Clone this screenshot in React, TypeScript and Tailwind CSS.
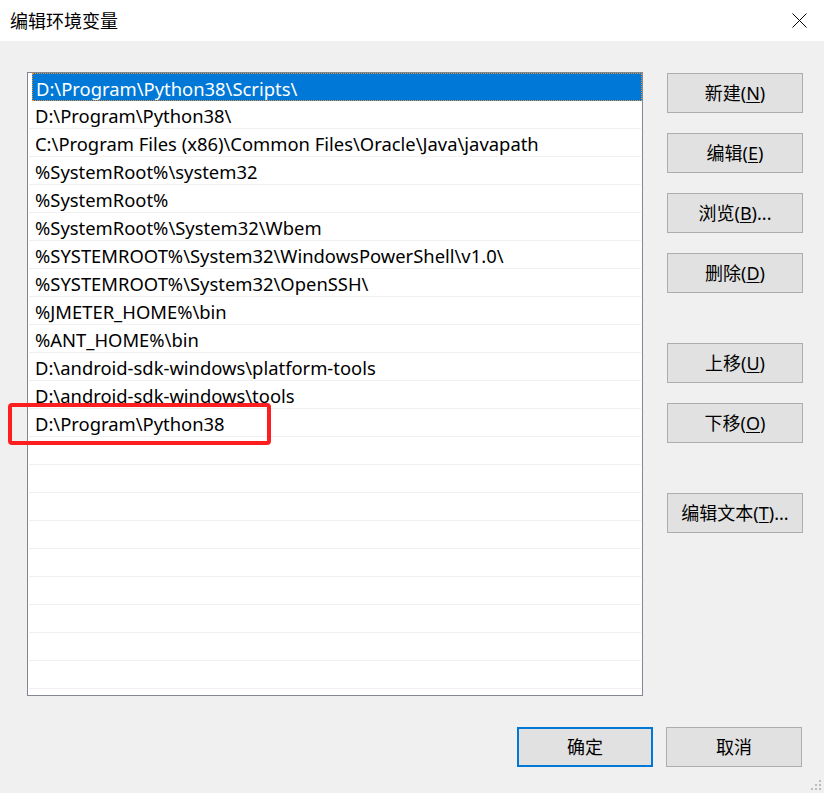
import React from 'react'

const font = { fontFamily: '"Noto Sans", "Noto Sans CJK SC", sans-serif' }

const paths = [
  'D:\\Program\\Python38\\Scripts\\',
  'D:\\Program\\Python38\\',
  'C:\\Program Files (x86)\\Common Files\\Oracle\\Java\\javapath',
  '%SystemRoot%\\system32',
  '%SystemRoot%',
  '%SystemRoot%\\System32\\Wbem',
  '%SYSTEMROOT%\\System32\\WindowsPowerShell\\v1.0\\',
  '%SYSTEMROOT%\\System32\\OpenSSH\\',
  '%JMETER_HOME%\\bin',
  '%ANT_HOME%\\bin',
  'D:\\android-sdk-windows\\platform-tools',
  'D:\\android-sdk-windows\\tools',
  'D:\\Program\\Python38',
]

const rows = [...paths, ...Array(22 - paths.length).fill('')]

function Btn({ label, hot, tail = '', primary = false }: { label: string; hot?: string; tail?: string; primary?: boolean }) {
  return (
    <button
      className={
        'flex h-[40px] w-[136px] items-center justify-center bg-[#e1e1e1] text-[18px] text-black ' +
        (primary ? 'border-2 border-[#0078d7]' : 'border border-[#adadad]')
      }
    >
      {label}
      {hot && (
        <>
          (<span className="underline underline-offset-2">{hot}</span>){tail}
        </>
      )}
    </button>
  )
}

export default function App() {
  return (
    <div className="relative h-[793px] w-[824px] overflow-hidden bg-[#f0f0f0]" style={font}>
      {/* title bar */}
      <div className="flex h-[41px] items-center justify-between bg-white pl-[10px] pr-[17px]">
        <span className="text-[18px] leading-none text-black">编辑环境变量</span>
        <svg width="15" height="15" viewBox="0 0 15 15" className="mt-[-1px]">
          <path d="M0.5 0.5 L14.5 14.5 M14.5 0.5 L0.5 14.5" stroke="#000" strokeWidth="1" />
        </svg>
      </div>

      <div className="flex pl-[27px] pt-[31px]">
        {/* list */}
        <div className="h-[624px] w-[616px] border border-[#828790] bg-white">
          {rows.map((p, i) =>
            i === 0 ? (
              <div
                key={i}
                className="ml-[4px] flex h-[28px] items-center border border-dotted border-[#f0902c] bg-[#0078d7] pl-[3px] pt-[3px] text-[18.4px] text-white"
              >
                {p}
              </div>
            ) : (
              <div
                key={i}
                className="ml-[1px] mr-[1px] flex h-[28px] items-center border-b border-[#f0f0f0] pl-[6px] pt-[3px] text-[18.4px] text-black"
              >
                {p}
              </div>
            )
          )}
        </div>

        {/* side buttons */}
        <div className="ml-[24px] mt-[1px] flex flex-col">
          <div className="flex flex-col gap-[20px]">
            <Btn label="新建" hot="N" />
            <Btn label="编辑" hot="E" />
            <Btn label="浏览" hot="B" tail="..." />
            <Btn label="删除" hot="D" />
          </div>
          <div className="mt-[50px] flex flex-col gap-[20px]">
            <Btn label="上移" hot="U" />
            <Btn label="下移" hot="O" />
          </div>
          <div className="mt-[50px]">
            <Btn label="编辑文本" hot="T" tail="..." />
          </div>
        </div>
      </div>

      {/* bottom buttons */}
      <div className="mt-[31px] flex justify-end gap-[13px] pr-[22px]">
        <Btn label="确定" primary />
        <Btn label="取消" />
      </div>

      {/* highlight box */}
      <div className="absolute left-[8px] top-[403px] h-[42px] w-[263px] rounded-[4px] border-4 border-[#fd1f1f]" />

      {/* resize grip */}
      <svg width="12" height="12" viewBox="0 0 12 12" className="absolute bottom-[2px] right-[2px]">
        {[
          [8, 0],
          [8, 4], [4, 4],
          [8, 8], [4, 8], [0, 8],
        ].map(([x, y], k) => (
          <rect key={k} x={x + 1} y={y + 1} width="2" height="2" fill="#bcbcbc" />
        ))}
      </svg>
    </div>
  )
}
